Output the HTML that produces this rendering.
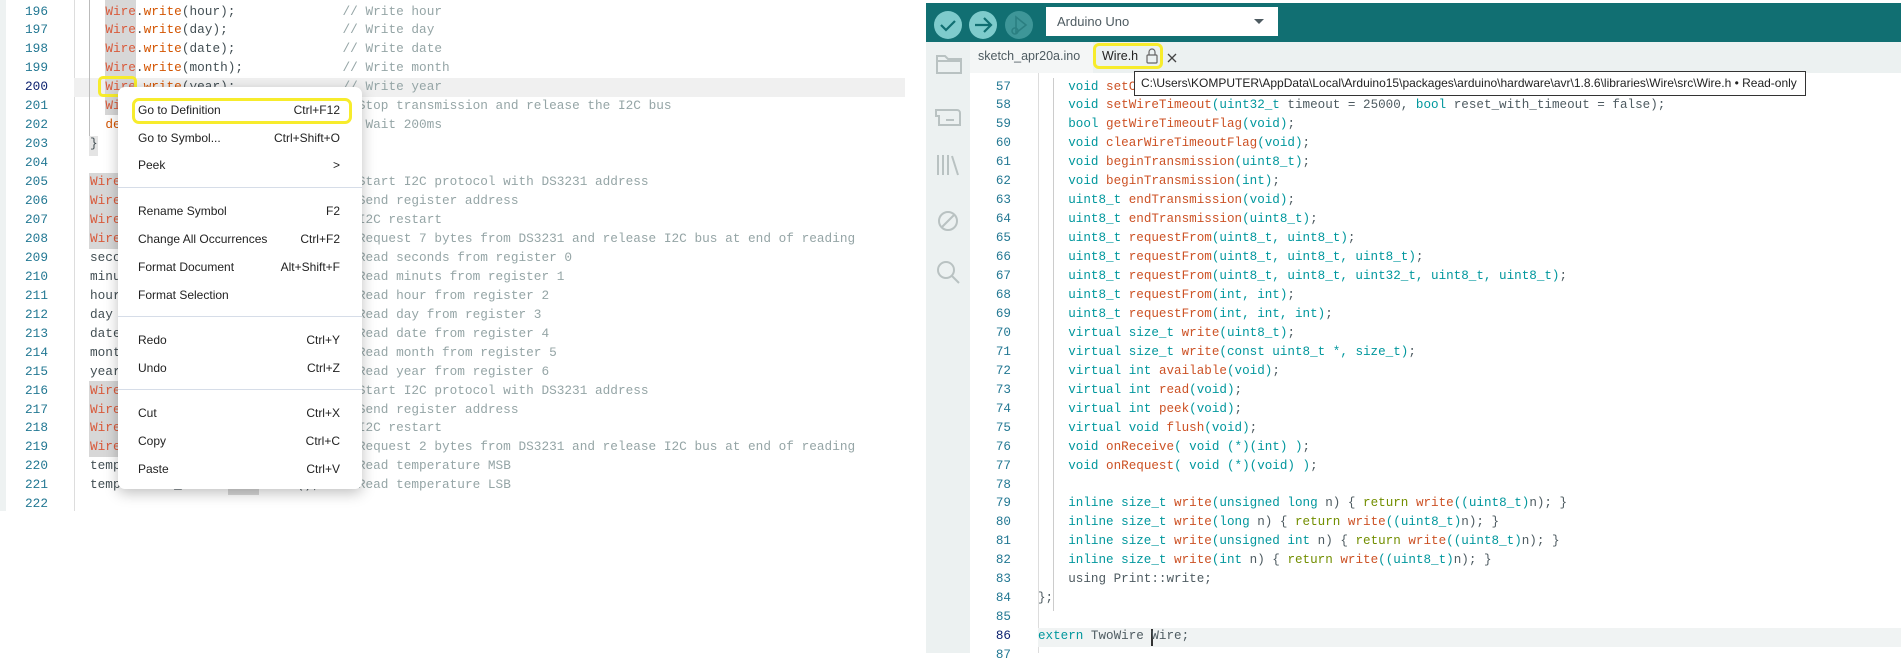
<!DOCTYPE html>
<html><head><meta charset="utf-8"><style>
*{margin:0;padding:0;box-sizing:border-box}
body{width:1901px;height:653px;background:#fff;position:relative;overflow:hidden;font-family:"Liberation Sans",sans-serif}
.abs{position:absolute}
pre{font-family:"Liberation Mono",monospace;white-space:pre;position:absolute;line-height:18.95px}
.L{font-size:12.75px;color:#434f54}
.R{font-size:12.6px;color:#4e5b61}
.ln{color:#237893;text-align:right}
.w{color:#d9593a}.m{color:#d35400}.c{color:#95a5a6}
.k{color:#00979d}.f{color:#cc5124}.r{color:#728e00}
.menu{position:absolute;left:118px;top:87px;width:244px;height:402px;background:#fff;border-radius:7px;box-shadow:0 4px 14px rgba(0,0,0,.25);font-size:12px;color:#222}
.mi{position:absolute;left:20px;right:22px;height:20px;line-height:20px}
.mi span{float:right}
.sep{position:absolute;left:0;right:0;height:1px;background:#d6dde8}
</style></head><body>
<!-- left panel -->
<div class="abs" style="left:0;top:0;width:6px;height:511px;background:#eef2f2"></div>
<div class="abs" style="left:74px;top:0;width:1px;height:511px;background:#ddd"></div>
<div class="abs" style="left:74px;top:78px;width:831px;height:19px;background:#f0f0f0"></div>
<div class="abs" style="left:89px;top:0;width:1px;height:136px;background:#bbb"></div>
<div class="abs" style="left:105px;top:0;width:31px;height:115px;background:#d7d7d7"></div>
<div class="abs" style="left:89px;top:136px;width:9px;height:20px;background:#e4e4e4"></div>
<div class="abs" style="left:89px;top:173px;width:31px;height:76px;background:#d7d7d7"></div>
<div class="abs" style="left:89px;top:381px;width:31px;height:76px;background:#d7d7d7"></div>
<div class="abs" style="left:228px;top:476px;width:31px;height:19px;background:#d7d7d7"></div>
<pre class="L ln" style="left:14px;top:2.5px;width:34px">196
197
198
199
<span style="color:#0b216f">200</span>
201
202
203
204
205
206
207
208
209
210
211
212
213
214
215
216
217
218
219
220
221
222</pre>
<pre class="L" style="left:90px;top:2.5px">  <span class="w">Wire</span>.<span class="m">write</span>(hour);              <span class="c">// Write hour</span>
  <span class="w">Wire</span>.<span class="m">write</span>(day);               <span class="c">// Write day</span>
  <span class="w">Wire</span>.<span class="m">write</span>(date);              <span class="c">// Write date</span>
  <span class="w">Wire</span>.<span class="m">write</span>(month);             <span class="c">// Write month</span>
  <span class="w">Wire</span>.<span class="m">write</span>(year);              <span class="c">// Write year</span>
  <span class="w">Wire</span>.<span class="m">endTransmission</span>();       <span class="c">// Stop transmission and release the I2C bus</span>
  <span class="m">delay</span>(200);                    <span class="c">// Wait 200ms</span>
}

<span class="w">Wire</span>.<span class="m">beginTransmission</span>(0x68);   <span class="c">// Start I2C protocol with DS3231 address</span>
<span class="w">Wire</span>.<span class="m">write</span>(0);                  <span class="c">// Send register address</span>
<span class="w">Wire</span>.<span class="m">endTransmission</span>(false);    <span class="c">// I2C restart</span>
<span class="w">Wire</span>.<span class="m">requestFrom</span>(0x68, 7, true);<span class="c">// Request 7 bytes from DS3231 and release I2C bus at end of reading</span>
seconds = <span class="w">Wire</span>.<span class="m">read</span>();          <span class="c">// Read seconds from register 0</span>
minute = <span class="w">Wire</span>.<span class="m">read</span>();           <span class="c">// Read minuts from register 1</span>
hour = <span class="w">Wire</span>.<span class="m">read</span>();             <span class="c">// Read hour from register 2</span>
day = <span class="w">Wire</span>.<span class="m">read</span>();              <span class="c">// Read day from register 3</span>
date = <span class="w">Wire</span>.<span class="m">read</span>();             <span class="c">// Read date from register 4</span>
month = <span class="w">Wire</span>.<span class="m">read</span>();            <span class="c">// Read month from register 5</span>
year = <span class="w">Wire</span>.<span class="m">read</span>();             <span class="c">// Read year from register 6</span>
<span class="w">Wire</span>.<span class="m">beginTransmission</span>(0x68);   <span class="c">// Start I2C protocol with DS3231 address</span>
<span class="w">Wire</span>.<span class="m">write</span>(0x11);               <span class="c">// Send register address</span>
<span class="w">Wire</span>.<span class="m">endTransmission</span>(false);    <span class="c">// I2C restart</span>
<span class="w">Wire</span>.<span class="m">requestFrom</span>(0x68, 2, true);<span class="c">// Request 2 bytes from DS3231 and release I2C bus at end of reading</span>
temperature_MSB = <span class="w">Wire</span>.<span class="m">read</span>();  <span class="c">// Read temperature MSB</span>
temperature_LSB = <span class="w">Wire</span>.<span class="m">read</span>();  <span class="c">// Read temperature LSB</span>
</pre>
<div class="abs" style="left:98px;top:76px;width:39px;height:21px;border:3px solid #f7ec2c;border-radius:5px"></div>
<div class="menu">
<div class="mi" style="top:13px">Go to Definition<span>Ctrl+F12</span></div>
<div class="mi" style="top:41px">Go to Symbol...<span>Ctrl+Shift+O</span></div>
<div class="mi" style="top:68px">Peek<span>&gt;</span></div>
<div class="sep" style="top:100px"></div>
<div class="mi" style="top:114px">Rename Symbol<span>F2</span></div>
<div class="mi" style="top:142px">Change All Occurrences<span>Ctrl+F2</span></div>
<div class="mi" style="top:170px">Format Document<span>Alt+Shift+F</span></div>
<div class="mi" style="top:198px">Format Selection</div>
<div class="sep" style="top:229px"></div>
<div class="mi" style="top:243px">Redo<span>Ctrl+Y</span></div>
<div class="mi" style="top:271px">Undo<span>Ctrl+Z</span></div>
<div class="sep" style="top:302px"></div>
<div class="mi" style="top:316px">Cut<span>Ctrl+X</span></div>
<div class="mi" style="top:344px">Copy<span>Ctrl+C</span></div>
<div class="mi" style="top:372px">Paste<span>Ctrl+V</span></div>
</div>
<div class="abs" style="left:132px;top:98px;width:220px;height:26px;border:3px solid #f7ec2c;border-radius:7px"></div>

<!-- right panel -->
<div class="abs" style="left:926px;top:3px;width:975px;height:39px;background:#116f72"></div>
<svg class="abs" style="left:926px;top:3px" width="120" height="39">
<circle cx="22" cy="22" r="14" fill="#7ecbcc"/><path d="M15 22l5 5 9-9" stroke="#116f72" stroke-width="2.2" fill="none"/>
<circle cx="57" cy="22" r="14" fill="#7ecbcc"/><path d="M49 22h15M58 15l7 7-7 7" stroke="#116f72" stroke-width="2.2" fill="none"/>
<circle cx="93" cy="22" r="14" fill="#3e9698"/><path d="M90 14l10 8-10 8z" stroke="#2b7f81" stroke-width="1.6" fill="none"/><circle cx="89" cy="28" r="3" fill="none" stroke="#2b7f81" stroke-width="1.5"/>
</svg>
<div class="abs" style="left:1046px;top:7px;width:232px;height:29px;background:#fff;font-size:13px;line-height:29px;padding-left:11px;color:#4e5b61">Arduino Uno</div>
<div class="abs" style="left:1254px;top:19px;width:0;height:0;border-left:5px solid transparent;border-right:5px solid transparent;border-top:5px solid #4e5b61"></div>
<div class="abs" style="left:926px;top:42px;width:975px;height:31px;background:#ecf1f1"></div>
<div class="abs" style="left:970px;top:42px;width:123px;height:31px;background:#f4f6f6"></div>
<div class="abs" style="left:926px;top:42px;width:44px;height:611px;background:#ecf1f1"></div>
<div class="abs" style="left:978px;top:49px;font-size:12.5px;color:#4e5b61">sketch_apr20a.ino</div>
<div class="abs" style="left:1102px;top:49px;font-size:12.5px;color:#222">Wire.h</div>
<svg class="abs" style="left:1145px;top:47px" width="40" height="20"><rect x="2" y="8" width="10" height="8" rx="1" fill="none" stroke="#666" stroke-width="1.2"/><path d="M4 8V5a3 3 0 0 1 6 0v3" fill="none" stroke="#666" stroke-width="1.2"/><path d="M23 7l8 8M31 7l-8 8" stroke="#444" stroke-width="1.3"/></svg>
<div class="abs" style="left:1093px;top:43px;width:70px;height:26px;border:3px solid #f7ec2c;border-radius:6px"></div>
<svg class="abs" style="left:934px;top:50px" width="30" height="240" fill="none" stroke="#b9c2c2" stroke-width="2">
<path d="M3 6h8l3 3h13v14H3z M3 11h24"/>
<path d="M5 60h18a3 3 0 0 1 3 3v12H5V66h-3v-6z M12 70h8"/>
<path d="M4 105v20M9 105v20M14 105v20M18 106l6 19"/>
<circle cx="14" cy="171" r="9"/><path d="M8 177l12-12"/>
<circle cx="12" cy="220" r="8"/><path d="M18 226l7 7"/>
</svg>
<div class="abs" style="left:1038px;top:73px;width:1px;height:580px;background:#ddd"></div>
<div class="abs" style="left:1053px;top:78px;width:1px;height:533px;background:#ccc"></div>
<div class="abs" style="left:1038px;top:628px;width:863px;height:19px;background:#f0f3f3"></div>
<div class="abs" style="left:1151px;top:629px;width:2px;height:17px;background:#333"></div>
<pre class="R ln" style="left:985px;top:77.5px;width:26px;color:#237893">57
58
59
60
61
62
63
64
65
66
67
68
69
70
71
72
73
74
75
76
77
78
79
80
81
82
83
84
85
<span style="color:#0b216f">86</span>
87</pre>
<pre class="R" style="left:1038px;top:77.5px">    <span class="k">void</span> <span class="f">setClock</span><span class="k">(uint32_t)</span>;
    <span class="k">void</span> <span class="f">setWireTimeout</span><span class="k">(uint32_t</span> timeout = 25000, <span class="k">bool</span> reset_with_timeout = false);
    <span class="k">bool</span> <span class="f">getWireTimeoutFlag</span><span class="k">(void)</span>;
    <span class="k">void</span> <span class="f">clearWireTimeoutFlag</span><span class="k">(void)</span>;
    <span class="k">void</span> <span class="f">beginTransmission</span><span class="k">(uint8_t)</span>;
    <span class="k">void</span> <span class="f">beginTransmission</span><span class="k">(int)</span>;
    <span class="k">uint8_t</span> <span class="f">endTransmission</span><span class="k">(void)</span>;
    <span class="k">uint8_t</span> <span class="f">endTransmission</span><span class="k">(uint8_t)</span>;
    <span class="k">uint8_t</span> <span class="f">requestFrom</span><span class="k">(uint8_t, uint8_t)</span>;
    <span class="k">uint8_t</span> <span class="f">requestFrom</span><span class="k">(uint8_t, uint8_t, uint8_t)</span>;
    <span class="k">uint8_t</span> <span class="f">requestFrom</span><span class="k">(uint8_t, uint8_t, uint32_t, uint8_t, uint8_t)</span>;
    <span class="k">uint8_t</span> <span class="f">requestFrom</span><span class="k">(int, int)</span>;
    <span class="k">uint8_t</span> <span class="f">requestFrom</span><span class="k">(int, int, int)</span>;
    <span class="k">virtual size_t</span> <span class="f">write</span><span class="k">(uint8_t)</span>;
    <span class="k">virtual size_t</span> <span class="f">write</span><span class="k">(const uint8_t *, size_t)</span>;
    <span class="k">virtual int</span> <span class="f">available</span><span class="k">(void)</span>;
    <span class="k">virtual int</span> <span class="f">read</span><span class="k">(void)</span>;
    <span class="k">virtual int</span> <span class="f">peek</span><span class="k">(void)</span>;
    <span class="k">virtual void</span> <span class="f">flush</span><span class="k">(void)</span>;
    <span class="k">void</span> <span class="f">onReceive</span><span class="k">( void (*)(int) )</span>;
    <span class="k">void</span> <span class="f">onRequest</span><span class="k">( void (*)(void) )</span>;

    <span class="k">inline size_t</span> <span class="f">write</span><span class="k">(unsigned long</span> n) { <span class="r">return</span> <span class="f">write</span><span class="k">((uint8_t)</span>n); }
    <span class="k">inline size_t</span> <span class="f">write</span><span class="k">(long</span> n) { <span class="r">return</span> <span class="f">write</span><span class="k">((uint8_t)</span>n); }
    <span class="k">inline size_t</span> <span class="f">write</span><span class="k">(unsigned int</span> n) { <span class="r">return</span> <span class="f">write</span><span class="k">((uint8_t)</span>n); }
    <span class="k">inline size_t</span> <span class="f">write</span><span class="k">(int</span> n) { <span class="r">return</span> <span class="f">write</span><span class="k">((uint8_t)</span>n); }
    using Print::write;
};

<span class="k">extern</span> TwoWire Wire;
</pre>
<div class="abs" style="left:1134px;top:71px;width:672px;height:25px;background:#fff;border:1px solid #333;font-size:12px;line-height:23px;padding-left:6px;color:#222;white-space:nowrap">C:\Users\KOMPUTER\AppData\Local\Arduino15\packages\arduino\hardware\avr\1.8.6\libraries\Wire\src\Wire.h • Read-only</div>
</body></html>
